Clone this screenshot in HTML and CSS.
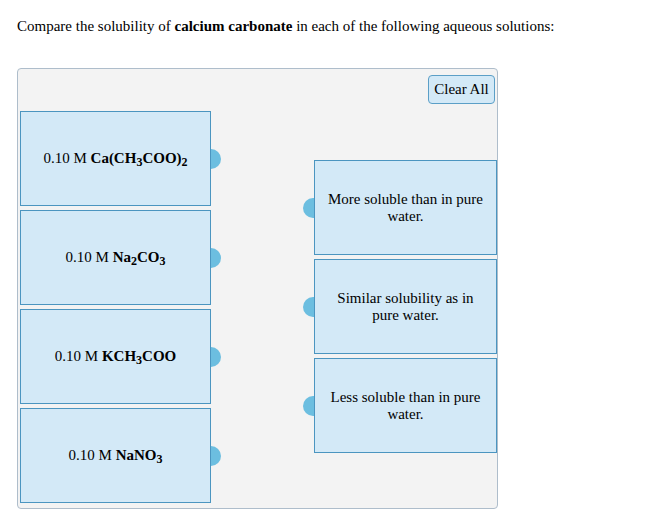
FILE: index.html
```html
<!DOCTYPE html>
<html>
<head>
<meta charset="utf-8">
<link rel="stylesheet" href="styles.css">
</head>
<body>
<div class="page">
  <p class="prompt">Compare the solubility of <b>calcium carbonate</b> in each of the following aqueous solutions:</p>
  <div class="panel">
    <div class="toolbar"><button class="clear">Clear All</button></div>
    <div class="board">
      <div class="col left">
        <div class="row"><div class="card">0.10 M&nbsp;<b>Ca(CH<sub>3</sub>COO)<sub>2</sub></b></div><span class="tab tab-r"></span></div>
        <div class="row"><div class="card">0.10 M&nbsp;<b>Na<sub>2</sub>CO<sub>3</sub></b></div><span class="tab tab-r"></span></div>
        <div class="row"><div class="card">0.10 M&nbsp;<b>KCH<sub>3</sub>COO</b></div><span class="tab tab-r"></span></div>
        <div class="row"><div class="card">0.10 M&nbsp;<b>NaNO<sub>3</sub></b></div><span class="tab tab-r"></span></div>
      </div>
      <div class="col right">
        <div class="row"><span class="tab tab-l"></span><div class="card target">More soluble than in pure water.</div></div>
        <div class="row"><span class="tab tab-l"></span><div class="card target">Similar solubility as in pure water.</div></div>
        <div class="row"><span class="tab tab-l"></span><div class="card target">Less soluble than in pure water.</div></div>
      </div>
    </div>
  </div>
</div>
</body>
</html>
```
FILE: styles.css
```css
html, body {
  margin: 0;
  padding: 0;
  background: #ffffff;
}
body {
  font-family: "Liberation Serif", "Times New Roman", serif;
  font-size: 15px;
  color: #000;
}
.page {
  padding: 17px 0 0 17px;
  width: 481px;
}
.prompt {
  margin: 0 0 33px 0;
  line-height: 18px;
  white-space: nowrap;
}
.panel {
  border: 1px solid #aebdcb;
  border-radius: 4px;
  background: #f3f3f3;
  padding: 6px 0 5px 0;
}
.toolbar {
  display: flex;
  justify-content: flex-end;
  padding-right: 2px;
}
.clear {
  font-family: "Liberation Serif", "Times New Roman", serif;
  font-size: 15px;
  color: #000;
  background: #d3e9f7;
  border: 1px solid #5b9fc7;
  border-radius: 4px;
  width: 67px;
  height: 29px;
  padding: 0;
}
.board {
  display: flex;
  justify-content: space-between;
  padding-left: 2px;
  margin-top: 7px;
}
.col {
  display: flex;
  flex-direction: column;
  gap: 4px;
}
.right {
  margin-top: 49px;
}
.row {
  display: flex;
  align-items: center;
}
.card {
  box-sizing: border-box;
  width: 191px;
  height: 95px;
  border: 1px solid #4b95c0;
  background: #d3e9f7;
  display: flex;
  align-items: center;
  justify-content: center;
  text-align: center;
  line-height: 17px;
}
.card sub {
  font-size: 12px;
  line-height: 0;
  vertical-align: -3px;
}
.target {
  width: 183px;
  padding: 0 11px;
}
.tab {
  display: block;
  width: 10px;
  height: 20px;
  background: #6cbee0;
}
.tab-r {
  border-radius: 0 10px 10px 0;
}
.tab-l {
  width: 11px;
  border-radius: 11px 0 0 11px;
}
```
